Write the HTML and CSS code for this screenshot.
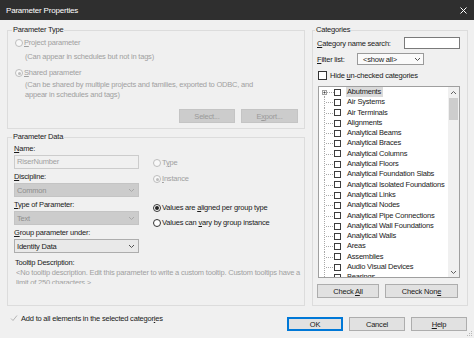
FILE: index.html
```html
<!DOCTYPE html>
<html>
<head>
<meta charset="utf-8">
<title>Parameter Properties</title>
<link rel="stylesheet" href="styles.css">
</head>
<body>
<div class="dialog">
  <header class="titlebar">
    <span class="title">Parameter Properties</span>
    <svg class="close" width="7" height="7" viewBox="0 0 7 7"><path d="M0.5 0.5 L6.5 6.5 M6.5 0.5 L0.5 6.5" stroke="#ffffff" stroke-width="1" fill="none"/></svg>
  </header>
  <main class="main">
    <div class="leftcol">
      <fieldset class="group ptype">
        <legend>Parameter Type</legend>
        <div class="radio dis r1"><span class="rb"></span><span><u>P</u>roject parameter</span></div>
        <div class="hint h1">(Can appear in schedules but not in tags)</div>
        <div class="radio dis on r2"><span class="rb"></span><span><u>S</u>hared parameter</span></div>
        <div class="hint h2">(Can be shared by multiple projects and families, exported to ODBC, and<br>appear in schedules and tags)</div>
        <div class="btnrow">
          <span class="btn disabled w-select"><span>Select...</span></span>
          <span class="btn disabled w-export"><span>E<u>x</u>port...</span></span>
        </div>
      </fieldset>
      <fieldset class="group pdata">
        <legend>Parameter Data</legend>
        <div class="pgrid">
          <div class="fields">
            <div class="field">
              <div class="flabel"><u>N</u>ame:</div>
              <div class="input dis">RiserNumber</div>
            </div>
            <div class="field">
              <div class="flabel"><u>D</u>iscipline:</div>
              <div class="select dis"><span>Common</span><svg class="chev" width="5" height="3" viewBox="0 0 5 3"><path d="M0 0 L2.5 2.5 L5 0" stroke="#a8a8a8" fill="none"/></svg></div>
            </div>
            <div class="field">
              <div class="flabel"><u>T</u>ype of Parameter:</div>
              <div class="select dis"><span>Text</span><svg class="chev" width="5" height="3" viewBox="0 0 5 3"><path d="M0 0 L2.5 2.5 L5 0" stroke="#a8a8a8" fill="none"/></svg></div>
            </div>
            <div class="field">
              <div class="flabel"><u>G</u>roup parameter under:</div>
              <div class="select"><span>Identity Data</span><svg class="chev" width="5" height="3" viewBox="0 0 5 3"><path d="M0 0 L2.5 2.5 L5 0" stroke="#505050" fill="none"/></svg></div>
            </div>
          </div>
          <div class="radios">
            <div class="radio dis rt"><span class="rb"></span><span>T<u>y</u>pe</span></div>
            <div class="radio dis on ri"><span class="rb"></span><span><u>I</u>nstance</span></div>
            <div class="radio on ra"><span class="rb"></span><span>Values are <u>a</u>ligned per group type</span></div>
            <div class="radio rv"><span class="rb"></span><span>Values can <u>v</u>ary by group instance</span></div>
          </div>
        </div>
        <div class="ttlabel">Tooltip Description:</div>
        <div class="tttext">&lt;No tooltip description. Edit this parameter to write a custom tooltip. Custom tooltips have a<br>limit of 250 characters.&gt;</div>
      </fieldset>
    </div>
    <fieldset class="group cats">
      <legend>Categories</legend>
      <div class="searchrow">
        <span><u>C</u>ategory name search:</span>
        <span class="textbox"></span>
      </div>
      <div class="filterrow">
        <span class="filterlabel"><u>F</u>ilter list:</span>
        <span class="select filtersel"><span>&lt;show all&gt;</span><svg class="chev" width="5" height="3" viewBox="0 0 5 3"><path d="M0 0 L2.5 2.5 L5 0" stroke="#505050" fill="none"/></svg></span>
      </div>
      <div class="hiderow"><span class="cbox"></span><span>Hide <u>u</u>n-checked categories</span></div>
      <div class="list">
        <div class="items">
          <div class="row first"><span class="branch"><svg class="plus" width="5" height="5" viewBox="0 0 5 5"><rect x="0.5" y="0.5" width="4" height="4" fill="#fff" stroke="#a0a0a0"/><path d="M1.5 2.5 H3.5 M2.5 1.5 V3.5" stroke="#404040"/></svg></span><span class="cb"></span><span class="lbl sel">Abutments</span></div>
          <div class="row"><span class="branch"></span><span class="cb"></span><span class="lbl">Air Systems</span></div>
          <div class="row"><span class="branch"></span><span class="cb"></span><span class="lbl">Air Terminals</span></div>
          <div class="row"><span class="branch"></span><span class="cb"></span><span class="lbl">Alignments</span></div>
          <div class="row"><span class="branch"></span><span class="cb"></span><span class="lbl">Analytical Beams</span></div>
          <div class="row"><span class="branch"></span><span class="cb"></span><span class="lbl">Analytical Braces</span></div>
          <div class="row"><span class="branch"></span><span class="cb"></span><span class="lbl">Analytical Columns</span></div>
          <div class="row"><span class="branch"></span><span class="cb"></span><span class="lbl">Analytical Floors</span></div>
          <div class="row"><span class="branch"></span><span class="cb"></span><span class="lbl">Analytical Foundation Slabs</span></div>
          <div class="row"><span class="branch"></span><span class="cb"></span><span class="lbl">Analytical Isolated Foundations</span></div>
          <div class="row"><span class="branch"></span><span class="cb"></span><span class="lbl">Analytical Links</span></div>
          <div class="row"><span class="branch"></span><span class="cb"></span><span class="lbl">Analytical Nodes</span></div>
          <div class="row"><span class="branch"></span><span class="cb"></span><span class="lbl">Analytical Pipe Connections</span></div>
          <div class="row"><span class="branch"></span><span class="cb"></span><span class="lbl">Analytical Wall Foundations</span></div>
          <div class="row"><span class="branch"></span><span class="cb"></span><span class="lbl">Analytical Walls</span></div>
          <div class="row"><span class="branch"></span><span class="cb"></span><span class="lbl">Areas</span></div>
          <div class="row"><span class="branch"></span><span class="cb"></span><span class="lbl">Assemblies</span></div>
          <div class="row"><span class="branch"></span><span class="cb"></span><span class="lbl">Audio Visual Devices</span></div>
          <div class="row"><span class="branch"></span><span class="cb"></span><span class="lbl">Bearings</span></div>
        </div>
        <div class="scrollbar">
          <div class="arrow"><svg width="5" height="3" viewBox="0 0 5 3"><path d="M0 3 L2.5 0.5 L5 3" stroke="#606060" fill="none"/></svg></div>
          <div class="thumb"></div>
          <div class="track"></div>
          <div class="arrow"><svg width="5" height="3" viewBox="0 0 5 3"><path d="M0 0 L2.5 2.5 L5 0" stroke="#606060" fill="none"/></svg></div>
        </div>
      </div>
      <div class="catbtns">
        <span class="btn w-checkall"><span>Check <u>A</u>ll</span></span>
        <span class="btn w-checknone"><span>Check Non<u>e</u></span></span>
      </div>
    </fieldset>
  </main>
  <footer class="footer">
    <div class="addrow dis"><svg class="addcheck" width="8" height="8" viewBox="0 0 8 8"><path d="M1 4.5 L3 6.5 L7 1.5" stroke="#b4b4b4" stroke-width="1" fill="none"/></svg><span>Add to all elements in the selected categor<u>i</u>es</span></div>
    <div class="footbtns">
      <span class="btn default"><span>OK</span></span>
      <span class="btn"><span>Cancel</span></span>
      <span class="btn"><span><u>H</u>elp</span></span>
    </div>
  </footer>
  <svg class="grip" width="6" height="6" viewBox="0 0 6 6"><rect x="4" y="0" width="1" height="1" fill="#b8b8b8"/><rect x="2" y="2" width="1" height="1" fill="#b8b8b8"/><rect x="4" y="2" width="1" height="1" fill="#b8b8b8"/><rect x="0" y="4" width="1" height="1" fill="#b8b8b8"/><rect x="2" y="4" width="1" height="1" fill="#b8b8b8"/><rect x="4" y="4" width="1" height="1" fill="#b8b8b8"/></svg>
</div>
</body>
</html>
```
FILE: styles.css
```css
* { box-sizing: border-box; }
html, body { margin: 0; padding: 0; }
body {
  width: 474px; height: 338px; overflow: hidden;
  background: #f0f0f0;
  font-family: "Liberation Sans", Arial, sans-serif;
  font-size: 7.5px; letter-spacing: -0.2px; color: #1a1a1a;
}
u { text-decoration-thickness: 1px; text-underline-offset: 1px; }

.dialog {
  width: 474px; height: 338px;
  display: flex; flex-direction: column;
  background: #f0f0f0; position: relative;
}
.titlebar {
  flex: none; height: 20px; background: #2f2f2f; color: #fff;
  display: flex; align-items: center; justify-content: space-between;
  padding: 0 7px 0 6px;
}
.title { font-size: 8px; letter-spacing: -0.2px; }

.main { flex: 1; display: flex; gap: 7px; padding: 5px 6px 0 7px; min-height: 0; }
.leftcol { width: 298px; display: flex; flex-direction: column; gap: 3px; }

.group { margin: 0; border: 1px solid #dcdcdc; min-width: 0; }
.group legend { padding: 0 1px; line-height: 10px; height: 10px; }

/* Parameter Type */
.ptype { flex: none; height: 104px; padding: 0 6px 0 7px; }
.ptype legend { margin-left: -3px; }
.radio { display: flex; align-items: center; height: 10px; line-height: 10px; white-space: nowrap; }
.rb {
  flex: none; width: 8px; height: 8px; border-radius: 50%;
  border: 1px solid #333; background: #fff; margin-right: 1px; position: relative;
}
.radio.dis { color: #a0a0a0; }
.radio.dis .rb { border-color: #bdbdbd; background: #f8f8f8; }
.radio.on .rb::after {
  content: ""; position: absolute; left: 1px; top: 1px; width: 4px; height: 4px;
  border-radius: 50%; background: #222;
}
.radio.dis.on .rb::after { background: #bdbdbd; left: 1.5px; top: 1.5px; width: 3px; height: 3px; }
.hint { color: #a0a0a0; padding-left: 10px; line-height: 10px; white-space: nowrap; }
.r1 { margin-top: 3px; }
.h1 { margin-top: 4px; }
.r2 { margin-top: 6px; }
.h2 { margin-top: 2px; }
.btnrow { margin-top: 9px; display: flex; justify-content: flex-end; gap: 6px; }

.btn {
  display: flex; align-items: center; justify-content: center;
  height: 14px; border: 1px solid #adadad; background: #e1e1e1; white-space: nowrap;
}
.btn.disabled { background: #cccccc; border-color: #c4c4c4; color: #9a9a9a; }
.w-select { width: 56px; }
.w-export { width: 57px; }

/* Parameter Data */
.pdata { flex: 1; padding: 0 2px 0 6px; }
.pdata legend { margin-left: -2px; }
.pgrid { display: flex; margin-top: 2px; }
.fields { width: 125px; display: flex; flex-direction: column; gap: 3px; }
.flabel { line-height: 10px; height: 10px; margin-bottom: 1px; white-space: nowrap; }
.input {
  height: 14px; border: 1px solid #cccccc; background: #f0f0f0;
  padding: 0 2px; line-height: 12px; color: #a0a0a0;
}
.select {
  height: 14px; border: 1px solid #adadad; background: #e9e9e9;
  display: flex; align-items: center; justify-content: space-between;
  padding: 0 4px 0 2px;
}
.select.dis { background: #cccccc; border-color: #c4c4c4; color: #8e8e8e; }
.chev { flex: none; }
.radios { margin-left: 14px; }
.rt { margin-top: 14px; }
.ri { margin-top: 6px; }
.ra { margin-top: 19px; }
.rv { margin-top: 5px; }
.ttlabel { margin-top: 5px; line-height: 10px; height: 10px; padding-left: 1px; }
.tttext {
  margin-top: 0; margin-left: 2px; height: 16px; overflow: hidden;
  line-height: 10px; white-space: nowrap; color: #a0a0a0;
}

/* Categories */
.cats { flex: none; width: 156px; padding: 0 7px 0 4px; }
.cats legend { margin-left: -2px; }
.searchrow {
  margin-top: 2px; height: 12px; display: flex; align-items: center;
  justify-content: space-between; white-space: nowrap;
}
.textbox { width: 56px; height: 12px; border: 1px solid #7a7a7a; background: #fff; }
.filterrow { margin-top: 4px; height: 12px; display: flex; align-items: center; white-space: nowrap; }
.filterlabel { width: 40px; }
.filtersel { width: 67px; height: 12px; background: #fafafa; border-color: #9a9a9a; padding: 0 3px 0 5px; }
.hiderow { margin-top: 5px; height: 10px; display: flex; align-items: center; white-space: nowrap; padding-left: 1px; }
.cbox { flex: none; width: 9px; height: 9px; border: 1px solid #333; background: #fff; margin-right: 3px; }

.list {
  margin-top: 6px; margin-left: 1px; width: 142px; height: 192px;
  border: 1px solid #9f9f9f; background: #fff; display: flex; overflow: hidden;
}
.items { flex: 1; min-width: 0; overflow: hidden; }
.row { height: 10.3px; display: flex; align-items: center; white-space: nowrap; }
.branch {
  flex: none; width: 15px; align-self: stretch;
  background:
    repeating-linear-gradient(90deg, #a8a8a8 0 1px, transparent 1px 2px) 7px 5px / 8px 1px no-repeat,
    repeating-linear-gradient(180deg, #a8a8a8 0 1px, transparent 1px 2px) 5px 0 / 1px 100% no-repeat;
}
.row.first .branch {
  display: flex; align-items: center; padding-left: 3px;
  background:
    repeating-linear-gradient(90deg, #a8a8a8 0 1px, transparent 1px 2px) 8px 5px / 7px 1px no-repeat,
    repeating-linear-gradient(180deg, #a8a8a8 0 1px, transparent 1px 2px) 5px 7px / 1px 100% no-repeat;
}
.cb { flex: none; width: 7px; height: 7px; border: 1px solid #3c3c3c; background: #fff; }
.lbl { margin-left: 5px; padding: 0 1px; line-height: 10.3px; }
.lbl.sel { background: #dadada; padding-right: 2px; }

.scrollbar { flex: none; width: 11px; background: #f0f0f0; display: flex; flex-direction: column; }
.arrow { height: 10px; display: flex; align-items: center; justify-content: center; flex: none; }
.thumb { margin: 1px 1px 0; height: 22px; background: #cdcdcd; flex: none; }
.track { flex: 1; }

.catbtns { margin-top: 6px; display: flex; gap: 6px; }
.w-checkall { width: 62px; }
.w-checknone { width: 73px; }

/* Footer */
.footer {
  flex: none; height: 32px; display: flex; justify-content: space-between;
  align-items: flex-start; padding: 7px 7px 0 10px;
}
.addrow { height: 10px; display: flex; align-items: center; white-space: nowrap; }
.addcheck { flex: none; margin-right: 3px; }
.footbtns { margin-top: 4px; display: flex; gap: 6px; }
.footbtns .btn { width: 56px; }
.btn.default { border: 1px solid #0078d7; box-shadow: inset 0 0 0 1px #0078d7; }

.grip { position: absolute; right: 1px; bottom: 1px; }
```
